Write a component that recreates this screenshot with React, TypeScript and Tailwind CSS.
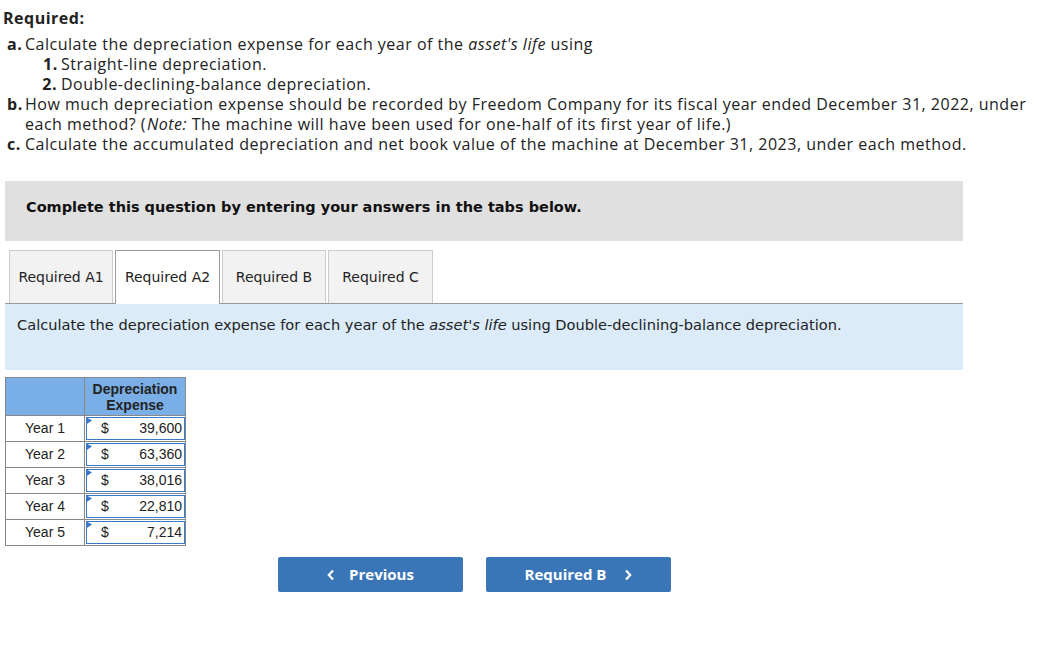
import React from "react";

const top = { fontFamily: '"Open Sans", "Lato", sans-serif' };
const tab = { fontFamily: '"DejaVu Sans", Verdana, sans-serif' };
const arial = { fontFamily: '"Liberation Sans", Arial, sans-serif' };

const rows = [
  ["Year 1", "39,600"],
  ["Year 2", "63,360"],
  ["Year 3", "38,016"],
  ["Year 4", "22,810"],
  ["Year 5", "7,214"],
];

export default function App() {
  return (
    <div className="w-[1055px] h-[646px] bg-white text-[#222]">
      <div className="pt-[8px] pl-[3px] w-[1042px] text-[16px] leading-[20px] tracking-[0.5px]" style={top}>
        <div className="font-bold">Required:</div>
        <div className="mt-[6px] pl-[4px]">
          <div className="flex">
            <span className="font-bold w-[18px] shrink-0">a.</span>
            <span>
              Calculate the depreciation expense for each year of the <i>asset's life</i> using
            </span>
          </div>
          <div className="flex pl-[36px]">
            <span className="font-bold w-[18px] text-right pr-[4px]">1.</span>
            <span>Straight-line depreciation.</span>
          </div>
          <div className="flex pl-[33px]">
            <span className="font-bold w-[21px] text-right pr-[4px]">2.</span>
            <span>Double-declining-balance depreciation.</span>
          </div>
          <div className="flex">
            <span className="font-bold w-[18px] shrink-0">b.</span>
            <span>
              How much depreciation expense should be recorded by Freedom Company for its fiscal year ended December 31, 2022, under each method? (<i className="ml-[1px]">Note:</i>&nbsp;The machine will have been used for one-half of its first year of life.)
            </span>
          </div>
          <div className="flex">
            <span className="font-bold w-[18px] shrink-0">c.</span>
            <span>
              Calculate the accumulated depreciation and net book value of the machine at December 31, 2023, under each method.
            </span>
          </div>
        </div>
      </div>

      <div className="mt-[27px] ml-[5px] w-[958px]">
        <div className="h-[60px] bg-[#e0e0e0] flex items-center pl-[21px] pb-[6px]" style={tab}>
          <span className="font-bold text-[14.5px] text-[#111]">
            Complete this question by entering your answers in the tabs below.
          </span>
        </div>

        <div className="mt-[9px] flex items-end gap-[2px] pl-[4px] border-b border-[#999] h-[54px]" style={tab}>
          <div className="h-[53px] w-[104px] bg-[#f2f2f2] border border-b-0 border-[#ccc] flex items-center justify-center text-[14px] text-[#222]">
            Required A1
          </div>
          <div className="h-[54px] -mb-px w-[105px] bg-white border border-b-0 border-[#999] flex items-center justify-center text-[14px] text-[#222]">
            Required A2
          </div>
          <div className="h-[53px] w-[104px] bg-[#f2f2f2] border border-b-0 border-[#ccc] flex items-center justify-center text-[14px] text-[#222]">
            Required B
          </div>
          <div className="h-[53px] w-[105px] bg-[#f2f2f2] border border-b-0 border-[#ccc] flex items-center justify-center text-[14px] text-[#222]">
            Required C
          </div>
        </div>

        <div className="h-[66px] bg-[#dbebf9] pl-[12px] pt-[10px] text-[14.6px] text-[#222]" style={tab}>
          Calculate the depreciation expense for each year of the <i>asset's life</i> using Double-declining-balance depreciation.
        </div>
      </div>

      <div className="mt-[7px] ml-[5px] w-[181px] text-[14px] text-[#222]" style={arial}>
        <div className="flex h-[39px] bg-[#7aaee6] border border-[#888]">
          <div className="w-[79px] border-r border-[#888]"></div>
          <div className="flex-1 flex flex-col items-center justify-center font-bold leading-[16px] text-[14px]">
            <span>Depreciation</span>
            <span>Expense</span>
          </div>
        </div>
        {rows.map(([y, v]) => (
          <div key={y} className="flex h-[26px] border border-t-0 border-[#888]">
            <div className="w-[79px] border-r border-[#888] flex items-center justify-center">{y}</div>
            <div className="flex-1 p-[1px] pr-0">
              <div className="relative h-full border border-[#3a78c8] flex items-center justify-between pl-[14px] pr-[2px]">
                <svg className="absolute left-[-1px] top-[-1px]" width="6" height="8" viewBox="0 0 6 8">
                  <polygon points="0,0 6,3.5 0,7.5" fill="#3a78c8" />
                </svg>
                <span>$</span>
                <span>{v}</span>
              </div>
            </div>
          </div>
        ))}
      </div>

      <div className="mt-[11px] flex gap-[23px] pl-[278px]" style={top}>
        <button className="w-[185px] h-[35px] bg-[#3a75b8] rounded-[2px] text-white font-bold text-[15px] flex items-center justify-center gap-[14px]">
          <svg width="8" height="12" viewBox="0 0 8 12"><path d="M6 1.5 L1.8 6 L6 10.5" stroke="white" strokeWidth="2.2" fill="none" /></svg>
          <span>Previous</span>
        </button>
        <button className="w-[185px] h-[35px] bg-[#3a75b8] rounded-[2px] text-white font-bold text-[15px] flex items-center justify-center gap-[18px]">
          <span>Required B</span>
          <svg width="8" height="12" viewBox="0 0 8 12"><path d="M2 1.5 L6.2 6 L2 10.5" stroke="white" strokeWidth="2.2" fill="none" /></svg>
        </button>
      </div>
    </div>
  );
}
